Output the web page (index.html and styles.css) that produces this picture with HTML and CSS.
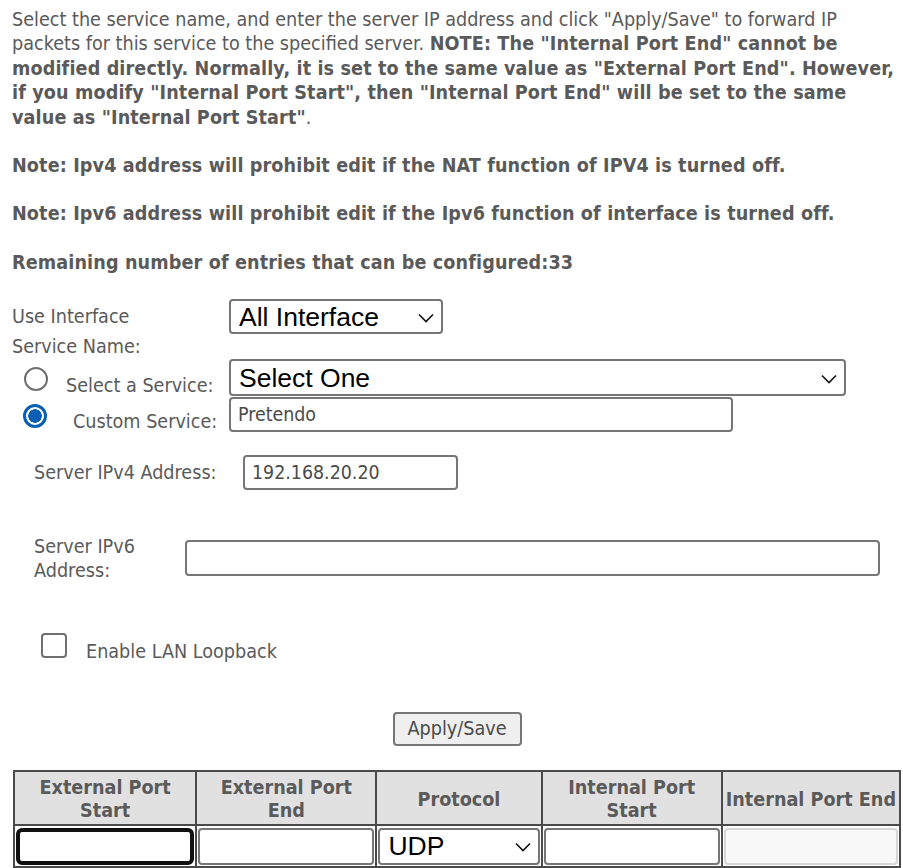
FILE: index.html
```html
<!DOCTYPE html>
<html lang="en">
<head>
<meta charset="utf-8">
<title>Port Forwarding</title>
<link rel="stylesheet" href="styles.css">
</head>
<body>
<div class="page">
  <p class="intro">Select the service name, and enter the server IP address and click "Apply/Save" to forward IP packets for this service to the specified server. <b>NOTE: The "Internal Port End" cannot be modified directly. Normally, it is set to the same value as "External Port End". However, if you modify "Internal Port Start", then "Internal Port End" will be set to the same value as "Internal Port Start"</b>.</p>
  <p class="note">Note: Ipv4 address will prohibit edit if the NAT function of IPV4 is turned off.</p>
  <p class="note">Note: Ipv6 address will prohibit edit if the Ipv6 function of interface is turned off.</p>
  <p class="note">Remaining number of entries that can be configured:33</p>

  <div class="form-grid">
    <div class="label">Use Interface</div>
    <div class="ctl">
      <span class="select-wrap sel-iface">
        <select class="big-select"><option>All Interface</option></select>
        <svg class="chev" viewBox="0 0 16 10" width="16" height="10"><path d="M1 1.5 L8 8.5 L15 1.5" fill="none" stroke="#111" stroke-width="1.6"/></svg>
      </span>
    </div>

    <div class="label span2">Service Name:</div>

    <div class="radio-row r1">
      <input type="radio" name="svc" class="radio">
      <span>Select a Service:</span>
    </div>
    <div class="ctl">
      <span class="select-wrap sel-service">
        <select class="big-select"><option>Select One</option></select>
        <svg class="chev" viewBox="0 0 16 10" width="16" height="10"><path d="M1 1.5 L8 8.5 L15 1.5" fill="none" stroke="#111" stroke-width="1.6"/></svg>
      </span>
    </div>

    <div class="radio-row r2">
      <input type="radio" name="svc" class="radio" checked>
      <span>Custom Service:</span>
    </div>
    <div class="ctl">
      <input type="text" class="text-in custom-in" value="Pretendo">
    </div>
  </div>

  <div class="addr-row ipv4">
    <div class="addr-label">Server IPv4 Address:</div>
    <input type="text" class="text-in ipv4-in" value="192.168.20.20">
  </div>

  <div class="addr-row ipv6">
    <div class="addr-label">Server IPv6<br>Address:</div>
    <input type="text" class="text-in ipv6-in" value="">
  </div>

  <div class="loop-row">
    <input type="checkbox" class="check">
    <span>Enable LAN Loopback</span>
  </div>

  <div class="btn-row">
    <button class="btn">Apply/Save</button>
  </div>

  <table class="ports">
    <thead>
      <tr>
        <th class="c1">External Port<br>Start</th>
        <th class="c2">External Port<br>End</th>
        <th class="c3">Protocol</th>
        <th class="c4">Internal Port<br>Start</th>
        <th class="c5">Internal Port End</th>
      </tr>
    </thead>
    <tbody>
      <tr>
        <td><input type="text" class="cell-in focus-in"></td>
        <td><input type="text" class="cell-in"></td>
        <td>
          <span class="select-wrap sel-proto">
            <select class="big-select"><option>UDP</option></select>
            <svg class="chev" viewBox="0 0 16 10" width="16" height="10"><path d="M1 1.5 L8 8.5 L15 1.5" fill="none" stroke="#111" stroke-width="1.6"/></svg>
          </span>
        </td>
        <td><input type="text" class="cell-in"></td>
        <td><input type="text" class="cell-in disabled-in" disabled></td>
      </tr>
    </tbody>
  </table>
</div>
</body>
</html>
```

FILE: styles.css
```css
html, body {
  margin: 0;
  padding: 0;
  background: #ffffff;
}

body {
  font-family: "DejaVu Sans Condensed", "DejaVu Sans", Verdana, sans-serif;
  font-stretch: semi-condensed;
  font-size: 19.6px;
  color: #5a5a5a;
}

.page {
  padding: 8px 0 0 12px;
  width: 886px;
}

p {
  margin: 0 0 24px 0;
  line-height: 24.4px;
}

b,
.note {
  font-weight: bold;
  letter-spacing: 0.12px;
}

/* form grid: labels on the left, controls in a column at x=229 */
.form-grid {
  display: grid;
  grid-template-columns: 217px 1fr;
}

.label {
  display: flex;
  align-items: center;
  line-height: 24px;
}

.span2 {
  grid-column: 1 / span 2;
  height: 25px;
}

.ctl {
  display: flex;
  align-items: center;
}

.radio-row {
  display: flex;
  align-items: flex-start;
}

.radio-row span {
  white-space: nowrap;
  line-height: 20px;
}

.r1 {
  padding-left: 12px;
}

.r1 .radio {
  margin-top: 8px;
}

.r1 span {
  margin-left: 18px;
  margin-top: 17px;
}

.r2 {
  padding-left: 11px;
}

.r2 .radio {
  margin-top: 8px;
}

.r2 span {
  margin-left: 26px;
  margin-top: 16px;
}

.radio {
  appearance: none;
  -webkit-appearance: none;
  margin: 0;
  width: 24px;
  height: 24px;
  flex: none;
  border-radius: 50%;
  border: 2px solid #6f6f6f;
  background: #fff;
  box-sizing: border-box;
}

.radio:checked {
  border: 3px solid #0b5fb3;
  background: radial-gradient(circle, #0b5fb3 0 6.5px, #fff 7px);
}

.select-wrap {
  position: relative;
  display: inline-block;
}

.big-select {
  appearance: none;
  -webkit-appearance: none;
  font-family: "Liberation Sans", Arial, sans-serif;
  font-size: 26.5px;
  color: #000;
  background: #fff;
  border: 2px solid #767676;
  border-radius: 4px;
  box-sizing: border-box;
  padding: 0 0 0 8px;
  margin: 0;
  display: block;
}

.chev {
  position: absolute;
  right: 9px;
  top: 50%;
  margin-top: -4px;
  pointer-events: none;
}

.sel-iface .big-select {
  width: 214px;
  height: 35px;
}

.sel-service .big-select {
  width: 617px;
  height: 37px;
}

.text-in {
  font-family: "DejaVu Sans Condensed", "DejaVu Sans", Verdana, sans-serif;
  font-stretch: semi-condensed;
  font-size: 19.4px;
  color: #4a4a4a;
  border: 2px solid #767676;
  border-radius: 4px;
  box-sizing: border-box;
  padding: 0 0 0 7px;
  margin: 0;
  background: #fff;
}

.custom-in {
  width: 504px;
  height: 35px;
  margin-top: 1px;
}

.addr-row {
  display: flex;
  align-items: center;
  padding-left: 22px;
}

.addr-label {
  line-height: 24px;
  white-space: nowrap;
}

.ipv4 {
  margin-top: 23px;
}

.ipv4 .addr-label {
  width: 209px;
}

.ipv4-in {
  width: 215px;
  height: 35px;
}

.ipv6 {
  margin-top: 45px;
}

.ipv6 .addr-label {
  width: 151px;
}

.ipv6-in {
  width: 695px;
  height: 36px;
  margin-top: -3px;
}

.loop-row {
  display: flex;
  align-items: flex-start;
  padding-left: 29px;
  margin-top: 50px;
}

.check {
  appearance: none;
  -webkit-appearance: none;
  margin: 0;
  width: 26px;
  height: 25px;
  border: 2px solid #6f6f6f;
  border-radius: 4px;
  box-sizing: border-box;
  background: #fff;
}

.loop-row span {
  margin-left: 19px;
  margin-top: 7px;
  line-height: 24px;
}

.btn-row {
  display: flex;
  justify-content: center;
  margin-top: 48px;
  padding-left: 4px;
}

.btn {
  font-family: "DejaVu Sans Condensed", "DejaVu Sans", Verdana, sans-serif;
  font-stretch: semi-condensed;
  font-size: 19.6px;
  color: #4a4a4a;
  background: #efefef;
  border: 2px solid #767676;
  border-radius: 4px;
  width: 129px;
  height: 34px;
  padding: 0 0 2px 0;
}

/* port table */
.ports {
  margin-top: 24px;
  margin-left: 1px;
  border-collapse: collapse;
  width: 888px;
  table-layout: fixed;
  border: 2px solid #555;
}

.ports th,
.ports td {
  border: 2px solid #4a4a4a;
  padding: 0;
}

.ports th {
  background: #e1e1e1;
  font-weight: bold;
  letter-spacing: 0;
  white-space: nowrap;
  line-height: 23px;
  height: 50px;
  padding-top: 2px;
  color: #5a5a5a;
  text-align: center;
}

.ports td {
  height: 38px;
  padding: 1px;
}

.c1 { width: 180px; }
.c2 { width: 178px; }
.c3 { width: 163px; }
.c4 { width: 178px; }
.c5 { width: 176px; }

.cell-in {
  display: block;
  width: 100%;
  height: 37px;
  box-sizing: border-box;
  border: 2px solid #767676;
  border-radius: 4px;
  background: #fff;
  margin: 0;
  font-size: 18px;
}

.focus-in {
  border: 4px solid #101010;
  border-radius: 6px;
}

.disabled-in {
  background: #f8f8f8;
  border-color: #d6d6d6;
}

.sel-proto {
  display: block;
}

.sel-proto .big-select {
  width: 100%;
  height: 37px;
  padding-left: 8px;
}
```
